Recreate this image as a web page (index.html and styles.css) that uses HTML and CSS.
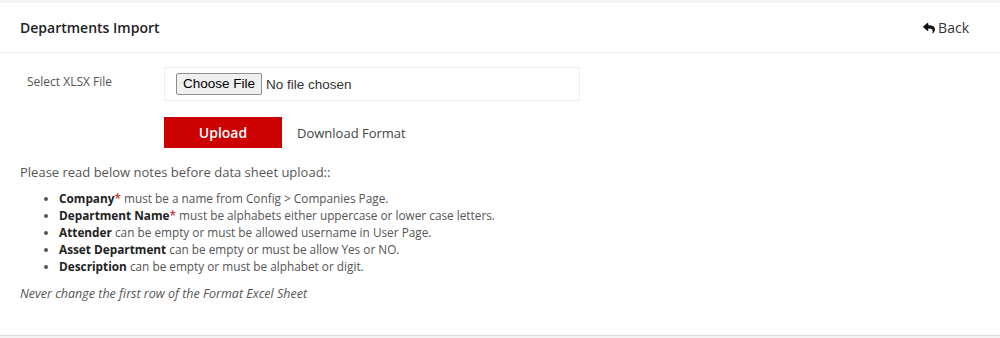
FILE: index.html
```html
<!DOCTYPE html>
<html>
<head>
<meta charset="utf-8">
<link rel="stylesheet" href="styles.css">
</head>
<body>
<div class="card">
  <div class="card-header">
    <h1 class="title">Departments Import</h1>
    <a class="back" href="#">
      <svg class="back-icon" viewBox="0 0 512 512" width="12" height="12"><path fill="#111" d="M8.309 189.836L184.313 37.851C199.719 24.546 224 35.347 224 56.015v80.053c160.629 1.839 288 34.032 288 186.258 0 61.441-39.581 122.309-83.333 154.132-13.653 9.931-33.111-2.533-28.077-18.631 45.344-145.012-21.507-183.51-176.59-185.742V360c0 20.7-24.3 31.453-39.687 18.164l-176.004-152c-11.071-9.562-11.086-26.753 0-36.328z"/></svg>
      <span>Back</span>
    </a>
  </div>
  <div class="card-body">
    <div class="form-row">
      <label class="form-label">Select XLSX File</label>
      <div class="file-box">
        <span class="file-btn">Choose File</span>
        <span class="file-name">No file chosen</span>
      </div>
    </div>
    <div class="action-row">
      <button class="upload">Upload</button>
      <a class="download" href="#">Download Format</a>
    </div>
    <p class="notes-intro">Please read below notes before data sheet upload::</p>
    <ul class="notes">
      <li><b>Company</b><span class="req">*</span> must be a name from Config &gt; Companies Page.</li>
      <li><b>Department Name</b><span class="req">*</span> must be alphabets either uppercase or lower case letters.</li>
      <li><b>Attender</b> can be empty or must be allowed username in User Page.</li>
      <li><b>Asset Department</b> can be empty or must be allow Yes or NO.</li>
      <li><b>Description</b> can be empty or must be alphabet or digit.</li>
    </ul>
    <p class="warning">Never change the first row of the Format Excel Sheet</p>
  </div>
</div>
</body>
</html>
```
FILE: styles.css
```css
html, body {
  margin: 0;
  padding: 0;
  background: #f4f4f4;
  font-family: "Open Sans", "Liberation Sans", sans-serif;
  color: #555;
}
.card {
  margin-top: 3px;
  background: #fff;
  height: 333px;
  border-bottom: 1px solid #dcdcdc;
  box-sizing: border-box;
}
.card-header {
  height: 49px;
  border-bottom: 1px solid #eeeeee;
  display: flex;
  align-items: center;
  justify-content: space-between;
  padding: 0 31px 0 20px;
}
.title {
  margin: 0;
  font-size: 14px;
  font-weight: 600;
  color: #222;
}
.back {
  display: flex;
  align-items: center;
  gap: 3px;
  font-size: 14px;
  color: #333;
  text-decoration: none;
}
.back-icon { display: block; }
.card-body {
  padding: 14px 20px 0 20px;
}
.form-row {
  display: flex;
  align-items: flex-start;
}
.form-label {
  width: 144px;
  box-sizing: border-box;
  padding: 6px 0 0 7px;
  font-size: 12px;
  line-height: 17px;
  color: #555;
}
.file-box {
  width: 416px;
  height: 34px;
  box-sizing: border-box;
  border: 1px solid #eeeeee;
  padding: 0 11px;
  display: flex;
  align-items: center;
  gap: 4px;
  font-family: "Liberation Sans", Arial, sans-serif;
  font-size: 13.5px;
  color: #222;
}
.file-btn {
  display: inline-block;
  height: 22px;
  line-height: 20px;
  box-sizing: border-box;
  padding: 0 6px;
  border: 1px solid #8f8f8f;
  border-radius: 2px;
  background: #efefef;
  color: #000;
}
.file-name { color: #333; }
.action-row {
  display: flex;
  align-items: center;
  margin: 16px 0 0 144px;
}
.upload {
  width: 118px;
  height: 31px;
  border: 0;
  background: #cc0000;
  color: #fff;
  font-family: "Open Sans", sans-serif;
  font-size: 14px;
  font-weight: 600;
  padding: 0;
}
.download {
  margin-left: 15px;
  font-size: 13px;
  color: #444;
  text-decoration: none;
}
.notes-intro {
  margin: 16px 0 0 0;
  font-size: 13px;
  line-height: 17px;
}
.notes {
  margin: 9px 0 0 0;
  padding-left: 39px;
  font-size: 11.8px;
  line-height: 17px;
}
.notes b { color: #222; font-weight: 700; }
.req { color: #cc0000; }
.warning {
  margin: 10px 0 0 0;
  font-size: 12.5px;
  line-height: 17px;
  font-style: italic;
}
```
